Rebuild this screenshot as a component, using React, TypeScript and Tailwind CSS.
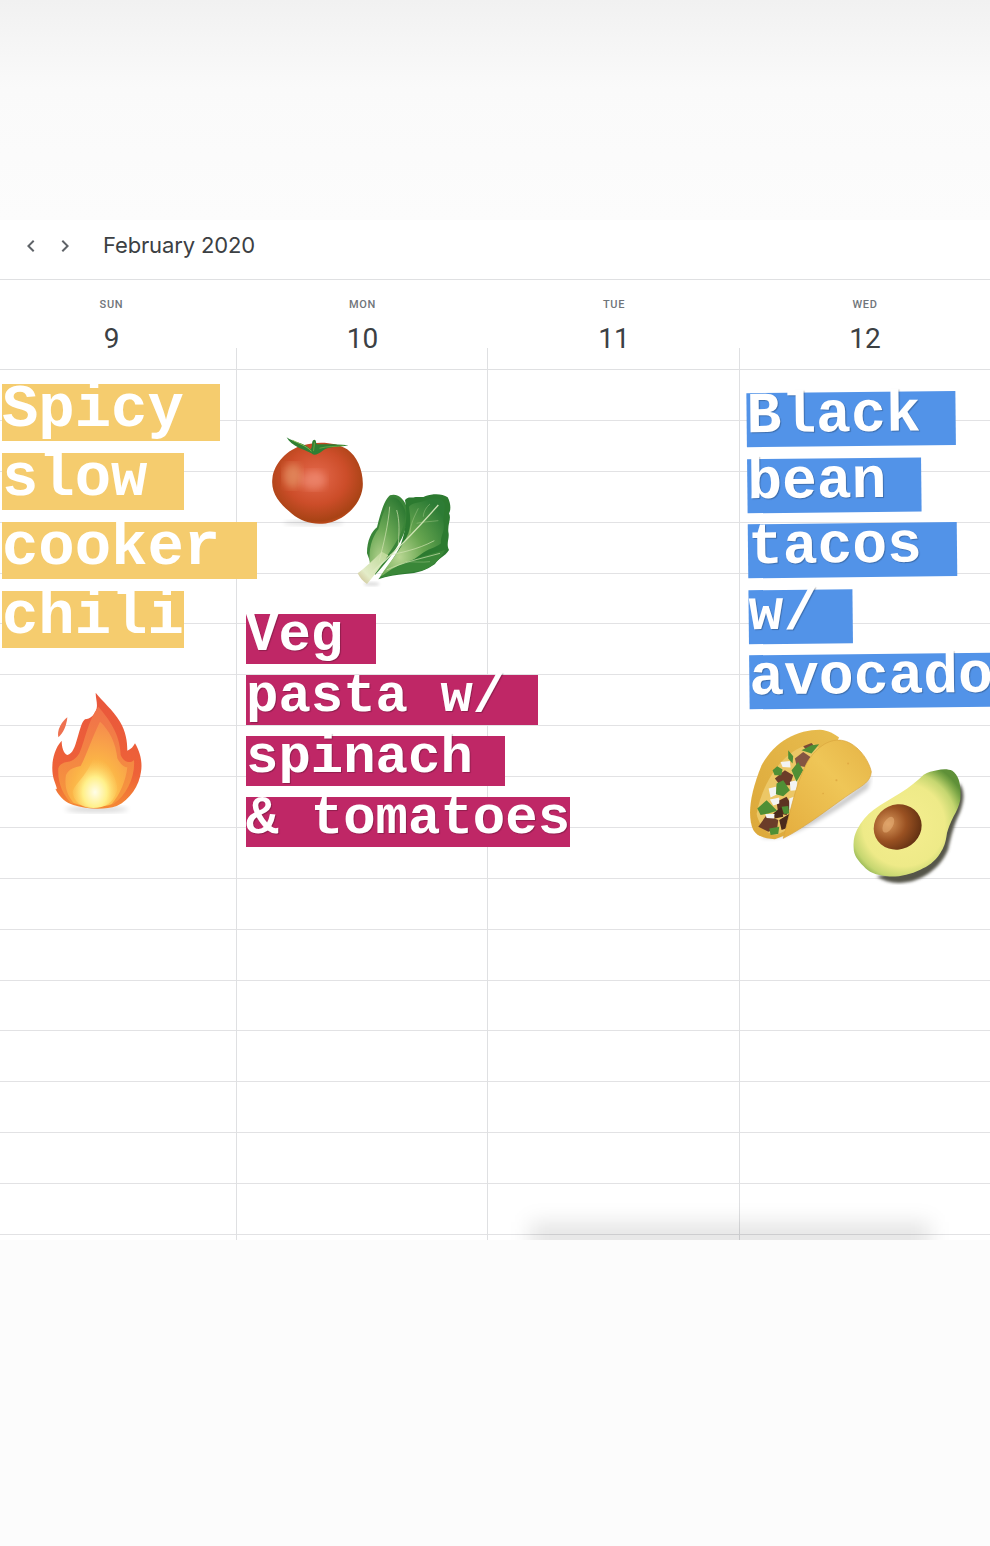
import { MdChevronLeft, MdChevronRight } from 'react-icons/md';

const days = [
  { label: 'SUN', date: '9', width: 'w-[237px]', pad: 'pr-[14px]' },
  { label: 'MON', date: '10', width: 'w-[251px]', pad: '' },
  { label: 'TUE', date: '11', width: 'w-[252px]', pad: '' },
  { label: 'WED', date: '12', width: 'w-[250px]', pad: '' },
];

const rows = Array.from({ length: 17 }, (_, i) => i);

function Flame() {
  return (
    <svg viewBox="0 0 390 420" className="absolute left-[30px] top-[310px] z-10 h-[140px] w-[130px] blur-[0.4px]">
      <defs>
        <linearGradient id="fl-outer" x1="0.5" y1="0" x2="0.5" y2="1">
          <stop offset="0" stopColor="#e9563c" />
          <stop offset="0.7" stopColor="#ee6238" />
          <stop offset="1" stopColor="#f58a35" />
        </linearGradient>
        <linearGradient id="fl-mid" x1="0.5" y1="0" x2="0.5" y2="1">
          <stop offset="0" stopColor="#f0714a" />
          <stop offset="1" stopColor="#f79a3c" />
        </linearGradient>
        <radialGradient id="fl-inner" cx="0.5" cy="0.85" r="0.8">
          <stop offset="0" stopColor="#ffe066" />
          <stop offset="0.5" stopColor="#fbb347" />
          <stop offset="1" stopColor="#f68f4c" />
        </radialGradient>
        <radialGradient id="fl-core" cx="0.5" cy="0.72" r="0.6">
          <stop offset="0" stopColor="#fffde8" />
          <stop offset="0.45" stopColor="#fff08a" />
          <stop offset="1" stopColor="#fcc04f" stopOpacity="0" />
        </radialGradient>
        <filter id="fl-blur"><feGaussianBlur stdDeviation="8" /></filter>
      </defs>
      <ellipse cx="200" cy="388" rx="95" ry="10" fill="#000" opacity="0.14" filter="url(#fl-blur)" />
      <path d="M112 112C110 135 100 160 85 172C80 150 95 125 112 112Z" fill="#ee7150" />
      <path
        d="M197 38C215 62 250 90 270 125C288 155 292 185 292 212C303 208 310 200 315 190C330 215 338 245 333 275C328 315 300 360 260 378C225 390 170 388 130 375C110 368 90 355 76 326C85 332 78 318 72 300C62 270 65 215 95 182C95 200 100 220 112 225C128 222 135 200 142 175C150 150 155 125 165 118C180 118 195 105 200 85C203 70 197 55 197 38Z"
        fill="url(#fl-outer)"
      />
      <path
        d="M205 80C235 115 270 160 272 225C282 250 305 250 312 240C316 290 290 345 250 372C215 385 165 382 122 368C100 345 82 310 85 265C95 235 125 260 148 220C165 180 175 120 205 80Z"
        fill="url(#fl-mid)"
      />
      <path
        d="M210 125C238 150 258 190 262 235C272 255 285 262 292 262C288 300 270 345 245 372C215 385 165 382 130 368C112 345 102 320 108 285C118 265 135 262 152 258C170 225 185 175 210 125Z"
        fill="url(#fl-inner)"
      />
      <path d="M198 215C225 245 262 285 262 330C250 370 225 384 190 384C155 384 130 365 128 335C135 310 175 285 198 215Z" fill="url(#fl-core)" />
    </svg>
  );
}

function Tomato() {
  return (
    <svg viewBox="0 0 300 270" preserveAspectRatio="none" className="absolute left-[26px] top-[63px] z-10 h-[98px] w-[101px] blur-[0.4px]">
      <defs>
        <radialGradient id="tm-body" cx="0.48" cy="0.42" r="0.62">
          <stop offset="0" stopColor="#e4694c" />
          <stop offset="0.55" stopColor="#cc4d29" />
          <stop offset="0.88" stopColor="#a84315" />
          <stop offset="1" stopColor="#d2501f" />
        </radialGradient>
        <filter id="tm-blur"><feGaussianBlur stdDeviation="11" /></filter>
        <filter id="tm-shadow"><feGaussianBlur stdDeviation="6" /></filter>
      </defs>
      <ellipse cx="150" cy="248" rx="90" ry="8" fill="#000" opacity="0.1" filter="url(#tm-shadow)" />
      <path
        d="M120 34C160 22 215 24 250 45C282 66 300 110 296 150C290 195 250 232 205 245C165 256 120 250 85 222C50 195 22 165 28 125C32 85 72 44 120 34Z"
        fill="url(#tm-body)"
      />
      <ellipse cx="88" cy="118" rx="28" ry="34" fill="#e8a070" opacity="0.6" filter="url(#tm-blur)" />
      <ellipse cx="150" cy="130" rx="38" ry="26" fill="#f09078" opacity="0.65" filter="url(#tm-blur)" />
      <path d="M70 12C92 26 118 26 138 42C142 48 146 40 146 26C148 16 158 16 158 28C160 36 180 26 254 34C222 40 196 36 178 48C165 58 150 64 144 56C124 46 85 38 70 12Z" fill="#2f7f33" />
      <path d="M88 20C108 30 126 34 144 50" stroke="#8fc04e" strokeWidth="2.5" fill="none" />
      <path d="M153 26L150 50M168 42C190 36 215 38 240 35" stroke="#7cb044" strokeWidth="2" fill="none" />
    </svg>
  );
}

function Lettuce() {
  return (
    <svg viewBox="0 0 300 300" className="absolute left-[118px] top-[120px] z-10 h-[100px] w-[100px] blur-[0.4px]">
      <defs>
        <radialGradient id="lt-back" cx="0.3" cy="0.85" r="0.95">
          <stop offset="0" stopColor="#b5d38f" />
          <stop offset="0.45" stopColor="#6ba855" />
          <stop offset="1" stopColor="#2e7a33" />
        </radialGradient>
        <radialGradient id="lt-front" cx="0.3" cy="0.75" r="0.85">
          <stop offset="0" stopColor="#b8d692" />
          <stop offset="0.45" stopColor="#68a650" />
          <stop offset="1" stopColor="#2d7c35" />
        </radialGradient>
        <linearGradient id="lt-stem" x1="0" y1="1" x2="1" y2="0">
          <stop offset="0" stopColor="#c9b98a" />
          <stop offset="0.3" stopColor="#e4ecc8" />
          <stop offset="1" stopColor="#b8d692" />
        </linearGradient>
        <filter id="lt-blur"><feGaussianBlur stdDeviation="5" /></filter>
      </defs>
      <ellipse cx="50" cy="282" rx="24" ry="6" fill="#000" opacity="0.12" filter="url(#lt-blur)" />
      <path d="M36 190C36 150 50 125 66 112C76 70 88 30 105 16C128 8 150 28 156 55C168 120 120 190 60 255Z" fill="#3a8538" />
      <path d="M44 218C40 170 56 135 70 118C81 75 96 38 108 22C130 18 148 45 152 70C152 120 110 185 60 245Z" fill="url(#lt-back)" />
      <path
        d="M150 30C160 18 170 25 178 22C190 18 200 25 212 18C235 10 262 10 278 22C288 40 288 60 282 70C290 85 278 100 280 125C285 145 272 160 282 180C270 200 250 205 240 222C215 240 190 250 150 252C125 254 95 258 70 268C95 235 120 200 135 170C150 130 160 80 150 30Z"
        fill="#2c7a30"
      />
      <path
        d="M162 50C175 35 195 40 215 30C240 22 262 25 268 40C272 60 262 80 266 100C270 125 255 140 258 160C240 175 220 175 195 195C170 215 125 238 75 260C105 215 145 170 160 130C170 100 165 75 162 50Z"
        fill="url(#lt-front)"
      />
      <path d="M205 240C170 248 120 250 75 264C115 225 180 205 270 180C255 210 235 228 205 240Z" fill="#3a8738" />
      <path d="M8 250C30 232 55 210 80 185L100 196C80 225 60 255 36 282C24 275 14 262 8 250Z" fill="url(#lt-stem)" />
      <path d="M45 252C100 205 175 130 250 45" stroke="#dcebc0" strokeWidth="4" fill="none" opacity="0.9" />
      <path d="M105 195C135 188 185 180 238 152M130 165C132 130 135 95 125 60M72 215C85 165 100 105 104 50M95 240C140 218 200 205 255 190" stroke="#d4e6b5" strokeWidth="2.5" fill="none" opacity="0.8" />
      <path d="M185 100C205 95 225 95 250 92M165 130C165 105 180 75 190 55M205 80C205 65 215 50 225 42M150 215C175 215 200 218 225 215" stroke="#c6dda3" strokeWidth="1.5" fill="none" opacity="0.7" />
    </svg>
  );
}

function Taco() {
  return (
    <svg viewBox="0 0 400 380" className="absolute left-0 top-[350px] z-10 h-[127px] w-[133px] blur-[0.5px]">
      <defs>
        <linearGradient id="tc-shell" x1="0" y1="1" x2="1" y2="0">
          <stop offset="0" stopColor="#e4ad3e" />
          <stop offset="0.6" stopColor="#efc657" />
          <stop offset="1" stopColor="#e5b346" />
        </linearGradient>
        <linearGradient id="tc-back" x1="0" y1="1" x2="1" y2="0">
          <stop offset="0" stopColor="#dca83a" />
          <stop offset="1" stopColor="#e8bd4f" />
        </linearGradient>
        <filter id="tc-blur"><feGaussianBlur stdDeviation="7" /></filter>
      </defs>
      <path d="M60 350C130 372 250 300 385 205L395 165C300 262 160 322 60 350Z" fill="#000" opacity="0.22" filter="url(#tc-blur)" />
      <path d="M40 330C22 290 28 225 65 135C105 60 175 28 240 28C265 30 285 40 298 52L150 340L105 358C75 355 52 350 40 330Z" fill="url(#tc-back)" />
      <path d="M50 282C62 210 110 110 190 78L222 70L240 85L160 320L110 345C85 345 58 320 50 282Z" fill="#ecc766" />
      <path d="M55 320L80 285L115 300L112 325L85 335Z" fill="#6b3d29" />
      <path d="M105 175L135 150L160 165L150 195L120 195Z" fill="#6b3d29" />
      <path d="M165 115L190 95L212 110L195 140L170 135Z" fill="#855542" />
      <path d="M110 245L140 230L155 255L140 285L115 280Z" fill="#5d3322" />
      <path d="M190 78L215 68L228 82L205 95Z" fill="#7b4a35" />
      <path d="M118 300L150 280L152 320L125 330Z M100 280L125 260L130 290L105 295Z" fill="#4a2a1c" />
      <path d="M86 205L108 200L112 222L92 232Z M90 238L118 232L118 250L100 256Z M76 282L104 282L102 295L80 294Z M122 125L150 122L152 142L128 140Z M150 185L172 180L170 210L152 212Z M148 235L162 230L158 270L148 268Z" fill="#f3f4f2" />
      <path d="M98 150L112 138L128 148L124 165L104 165Z M110 190L130 180L150 210L130 228L108 222Z M52 265L80 240L112 272L85 280L62 285Z M145 90L160 108L158 130L145 115Z M155 150L175 125L190 150L170 185Z M125 260L145 258L148 280L132 282Z M88 325L118 320L115 342L92 345Z M185 90L215 75L238 72L215 100Z" fill="#4f8f35" />
      <path
        d="M130 355C150 280 165 200 200 130C225 85 265 55 305 60C345 65 385 110 395 155C392 185 370 195 340 215C280 255 200 320 130 355Z"
        fill="url(#tc-shell)"
        stroke="#d9a53c"
        strokeWidth="2"
      />
      <circle cx="290" cy="180" r="3" fill="#d18f32" opacity="0.5" />
      <circle cx="250" cy="220" r="2.5" fill="#d18f32" opacity="0.5" />
      <circle cx="325" cy="130" r="3" fill="#d18f32" opacity="0.4" />
    </svg>
  );
}

function Avocado() {
  return (
    <svg viewBox="0 0 345 350" className="absolute left-[112.7px] top-[398px] z-10 h-[116.7px] w-[115px] blur-[0.5px]">
      <defs>
        <radialGradient id="av-flesh" cx="0.47" cy="0.52" r="0.62">
          <stop offset="0" stopColor="#f5ee8f" />
          <stop offset="0.62" stopColor="#eeea88" />
          <stop offset="0.8" stopColor="#c5d670" />
          <stop offset="0.93" stopColor="#7ea848" />
          <stop offset="1" stopColor="#5f9038" />
        </radialGradient>
        <radialGradient id="av-seed" cx="0.35" cy="0.35" r="0.75">
          <stop offset="0" stopColor="#d8975a" />
          <stop offset="0.5" stopColor="#9a5122" />
          <stop offset="1" stopColor="#5c2d10" />
        </radialGradient>
        <filter id="av-blur"><feGaussianBlur stdDeviation="5" /></filter>
      </defs>
      <path d="M320 45C335 70 335 95 320 135C305 165 295 200 285 245C265 295 215 335 160 343C125 348 95 342 70 325C150 320 280 200 320 45Z" fill="#55544a" filter="url(#av-blur)" />
      <path
        d="M252 7C268 2 285 2 298 8C318 22 325 50 322 95C318 115 310 130 302 145C292 165 286 180 282 195C278 225 272 240 262 255C245 282 225 295 202 305C170 320 135 328 102 325C70 322 45 312 32 295C12 275 2 260 2 240C0 215 5 200 12 185C25 160 42 140 62 125C90 105 115 92 142 75C170 58 190 40 212 20C225 12 238 10 252 7Z"
        fill="url(#av-flesh)"
      />
      <g transform="rotate(-25 134 177)">
        <ellipse cx="134" cy="177" rx="73" ry="67" fill="url(#av-seed)" />
      </g>
      <ellipse cx="106" cy="170" rx="14" ry="26" transform="rotate(30 106 170)" fill="#e8b078" opacity="0.55" />
    </svg>
  );
}

function ChipLines({ lines, className }: { lines: string[]; className: string }) {
  return (
    <>
      {lines.map((line) => (
        <div key={line} className={`w-fit whitespace-pre text-white ${className}`}>
          {line}
        </div>
      ))}
    </>
  );
}

export default function App() {
  return (
    <div className="h-[1546px] w-[990px] overflow-hidden bg-[#fcfcfc] font-['Roboto',sans-serif]">
      <div className="h-[220px] bg-gradient-to-b from-[#f1f1f1] via-[#fafafa] via-40% to-[#fcfcfc]" />

      <div className="relative h-[1020px] overflow-hidden bg-white">
        <div className="flex h-[60px] items-center border-b border-[#dfe0e2] pb-[8px] pl-[19px]">
          <MdChevronLeft className="h-6 w-6 text-[#5f6368]" />
          <MdChevronRight className="ml-[10px] h-6 w-6 text-[#5f6368]" />
          <h1 className="ml-[26px] font-['Inter',sans-serif] text-[22px] font-normal tracking-[-0.15px] text-[#3c4043]">February 2020</h1>
        </div>

        <div className="flex h-[90px] border-b border-[#dfe0e2]">
          {days.map((d, i) => (
            <div key={d.label} className={`${d.width} flex flex-col`}>
              <div className={`flex flex-col items-center ${d.pad}`}>
                <div className="pt-[18px] text-[11px] leading-[14px] font-medium tracking-[0.7px] text-[#70757a]">{d.label}</div>
                <div className="mt-[11px] h-[32px] text-[28px] leading-[32px] text-[#3c4043]">{d.date}</div>
              </div>
              <div className={`-mt-[7px] h-[21px] w-full ${i < 3 ? 'border-r border-[#dfe0e2]' : ''}`} />
            </div>
          ))}
        </div>

        <div className="flex">
          {days.map((d, i) => (
            <div key={d.label} className={`${d.width} relative h-[870px] ${i < 3 ? 'border-r border-[#dfe0e2]' : ''}`}>
              {rows.map((r) => (
                <div key={r} className="h-[50.88px] border-b border-[#e2e2e4]" />
              ))}
              {i === 0 && (
                <>
                  <div className="absolute left-[2px] top-[14px] z-20 flex flex-col gap-[12px] font-['Liberation_Mono',monospace] font-bold">
                    <ChipLines
                      lines={['Spicy ', 'slow ', 'cooker ', 'chili']}
                      className="h-[57px] bg-[#f5cc6e] text-[60.6px] leading-[52px]"
                    />
                  </div>
                  <Flame />
                </>
              )}
              {i === 1 && (
                <>
                  <Tomato />
                  <Lettuce />
                  <div className="absolute left-[9px] top-[244px] z-20 flex flex-col gap-[11px] font-['Liberation_Mono',monospace] font-bold">
                    <ChipLines
                      lines={['Veg ', 'pasta w/ ', 'spinach ', '& tomatoes']}
                      className="h-[50px] bg-[#bf2766] text-[54px] leading-[44px] [text-shadow:1px_1px_1px_rgba(0,0,0,0.25)]"
                    />
                  </div>
                </>
              )}
              {i === 3 && (
                <>
                  <div className="absolute left-[8px] top-[22px] z-20 flex -rotate-[0.6deg] flex-col gap-[11.5px] font-['Liberation_Mono',monospace] font-bold">
                    <ChipLines
                      lines={['Black ', 'bean ', 'tacos ', 'w/ ', 'avocado']}
                      className="h-[54px] bg-[#5293e8] text-[58px] leading-[47px] [text-shadow:1px_1px_1px_rgba(0,0,0,0.25)]"
                    />
                  </div>
                  <Taco />
                  <Avocado />
                </>
              )}
            </div>
          ))}
        </div>

        {/* soft shadow of the sheet sitting just below the grid */}
        <div className="absolute -bottom-[12px] left-[530px] z-10 h-[30px] w-[400px] bg-black/10 blur-[10px]" />
      </div>
    </div>
  );
}
